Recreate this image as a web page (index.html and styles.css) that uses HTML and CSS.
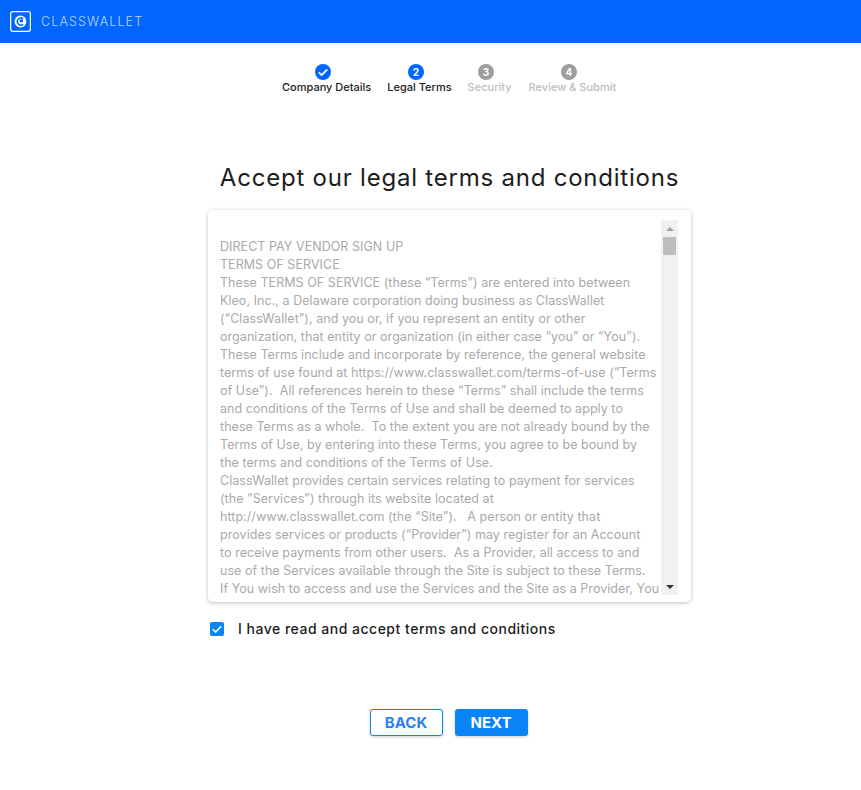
FILE: index.html
```html
<!DOCTYPE html>
<html lang="en">
<head>
<meta charset="utf-8">
<title>ClassWallet</title>
<link rel="stylesheet" href="styles.css">
</head>
<body>
<header class="topbar">
  <span class="logo">
    <svg viewBox="0 0 20 20" width="21" height="21"><rect x="0.6" y="0.6" width="18.8" height="18.8" rx="2" fill="none" stroke="#fff" stroke-width="1.2"/><circle cx="10" cy="10" r="5.6" fill="#fff"/><path d="M12.6 7.4a3.4 3.4 0 1 0 0 5.2" fill="none" stroke="#0066ff" stroke-width="1.4"/><circle cx="10.8" cy="9.2" r="1.7" fill="#0066ff"/></svg>
  </span>
  <span class="brand">CLASSWALLET</span>
</header>
<nav class="steps">
  <div class="step step-one">
    <span class="dot dot-on"><svg viewBox="0 0 16 16" width="16" height="16"><path d="M3.8 8.3l2.9 2.8 5.5-5.6" fill="none" stroke="#fff" stroke-width="1.8"/></svg></span>
    <span class="label">Company Details</span>
  </div>
  <div class="step step-two">
    <span class="dot dot-on">2</span>
    <span class="label">Legal Terms</span>
  </div>
  <div class="step step-three">
    <span class="dot dot-off">3</span>
    <span class="label label-off">Security</span>
  </div>
  <div class="step step-four">
    <span class="dot dot-off">4</span>
    <span class="label label-off">Review &amp; Submit</span>
  </div>
</nav>
<main class="content">
  <h1 class="title">Accept our legal terms and conditions</h1>
  <section class="card">
    <div class="terms">DIRECT PAY VENDOR SIGN UP<br>
TERMS OF SERVICE<br>
These TERMS OF SERVICE (these “Terms”) are entered into between<br>
Kleo, Inc., a Delaware corporation doing business as ClassWallet<br>
(“ClassWallet”), and you or, if you represent an entity or other<br>
organization, that entity or organization (in either case “you” or “You”).<br>
These Terms include and incorporate by reference, the general website<br>
terms of use found at https://www.classwallet.com/terms-of-use (“Terms<br>
of Use”).&nbsp; All references herein to these “Terms” shall include the terms<br>
and conditions of the Terms of Use and shall be deemed to apply to<br>
these Terms as a whole.&nbsp; To the extent you are not already bound by the<br>
Terms of Use, by entering into these Terms, you agree to be bound by<br>
the terms and conditions of the Terms of Use.<br>
ClassWallet provides certain services relating to payment for services<br>
(the “Services”) through its website located at<br>
http://www.classwallet.com (the “Site”).&nbsp;&nbsp; A person or entity that<br>
provides services or products (“Provider”) may register for an Account<br>
to receive payments from other users.&nbsp; As a Provider, all access to and<br>
use of the Services available through the Site is subject to these Terms.<br>
If You wish to access and use the Services and the Site as a Provider, You</div>
    <div class="scrollbar">
      <span class="arrow arrow-up"></span>
      <span class="thumb"></span>
      <span class="track"></span>
      <span class="arrow arrow-down"></span>
    </div>
  </section>
  <label class="accept">
    <span class="box"><svg viewBox="0 0 14 14" width="14" height="14"><path d="M2.8 7.2l2.8 2.8 5.6-5.8" fill="none" stroke="#fff" stroke-width="1.6"/></svg></span>
    <span class="accept-text">I have read and accept terms and conditions</span>
  </label>
  <div class="actions">
    <button class="btn btn-back" type="button">BACK</button>
    <button class="btn btn-next" type="button">NEXT</button>
  </div>
</main>
</body>
</html>
```
FILE: styles.css
```css
* { box-sizing: border-box; }
html, body { margin: 0; padding: 0; }
body {
  width: 861px;
  height: 790px;
  overflow: hidden;
  background: #fff;
  color: #1c1c1c;
  font-family: Inter, "Liberation Sans", sans-serif;
}
.topbar {
  height: 43px;
  background: #0066ff;
  display: flex;
  align-items: center;
  padding-left: 10px;
}
.logo { display: flex; width: 21px; height: 21px; }
.brand {
  margin-left: 10px;
  color: #b9d4ff;
  font-size: 12.5px;
  font-weight: 300;
  letter-spacing: 1.15px;
}
.steps {
  display: flex;
  height: 64px;
  padding: 21px 0 0 282px;
}
.step { display: flex; flex-direction: column; align-items: center; }
.step-two { margin-left: 16px; }
.step-three { margin-left: 16px; }
.step-four { margin-left: 17px; }
.dot {
  width: 16px;
  height: 16px;
  margin-right: 7px;
  border-radius: 50%;
  display: flex;
  align-items: center;
  justify-content: center;
  color: #fff;
  font-size: 10px;
  font-weight: 700;
}
.dot-on { background: #0066ff; }
.dot-off { background: #9e9e9e; }
.label {
  font-size: 11px;
  line-height: 14px;
  font-weight: 500;
  color: #1c1c1c;
  white-space: nowrap;
}
.label-off { color: #bdbdbd; }
.content { display: flex; flex-direction: column; align-items: center; padding-left: 38px; }
.title {
  margin: 55px 0 0;
  font-size: 24px;
  line-height: 32px;
  font-weight: 400;
  letter-spacing: 0.78px;
  color: #1c1c1c;
}
.card {
  margin: 16px 0 0;
  width: 483px;
  height: 392px;
  background: #fff;
  border-radius: 5px;
  box-shadow: 0 1px 4px rgba(0, 0, 0, 0.25);
  display: flex;
  padding: 10px 13px 7px 12px;
}
.terms {
  flex: 1;
  height: 375px;
  overflow: hidden;
  padding-top: 18px;
  font-size: 12.5px;
  line-height: 18px;
  letter-spacing: 0.05px;
  color: #a9a9a9;
  white-space: nowrap;
}
.scrollbar {
  width: 17px;
  height: 375px;
  background: #f1f1f1;
  display: flex;
  flex-direction: column;
  align-items: center;
}
.arrow { width: 0; height: 0; border-left: 4px solid transparent; border-right: 4px solid transparent; }
.arrow-up { margin-top: 7px; border-bottom: 4px solid #a3a3a3; }
.thumb { margin-top: 6px; width: 13px; height: 18px; background: #bdbdbd; }
.track { flex: 1; }
.arrow-down { margin-bottom: 6px; border-top: 4px solid #333; }
.accept {
  align-self: flex-start;
  margin: 19px 0 0 172px;
  display: flex;
  align-items: center;
}
.box {
  width: 14px;
  height: 14px;
  border-radius: 2px;
  background: #0a84f5;
  display: flex;
}
.accept-text {
  margin-left: 14px;
  font-size: 14px;
  line-height: 16px;
  font-weight: 500;
  letter-spacing: 0.5px;
  color: #1c1c1c;
}
.actions {
  margin: 72px 2px 0 0;
  display: flex;
  gap: 12px;
}
.btn {
  height: 27px;
  border-radius: 3px;
  font-family: inherit;
  font-size: 15px;
  font-weight: 700;
  padding: 0;
  box-shadow: 0 1px 3px rgba(0, 0, 0, 0.2);
}
.btn-back { width: 73px; background: #fff; border: 1px solid #0a84f5; color: #2f7ff5; }
.btn-next { width: 73px; background: #0a84f5; border: 0; color: #fff; }
```
